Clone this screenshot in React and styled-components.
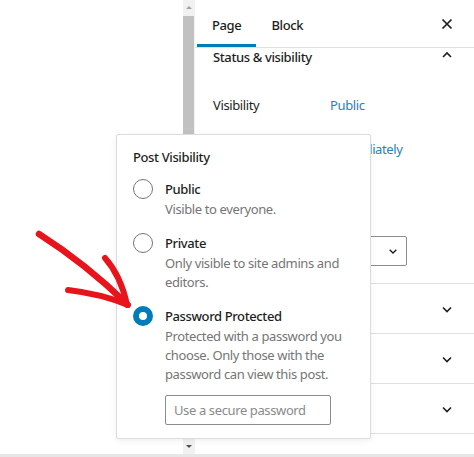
import React from "react";
import styled, { createGlobalStyle } from "styled-components";

const Global = createGlobalStyle`
  html, body { margin: 0; padding: 0; background: #fff; }
  body { font-family: "Noto Sans", "Open Sans", sans-serif; color: #1e1e1e; }
  * { box-sizing: border-box; }
`;

const Frame = styled.div`
  position: relative;
  width: 474px;
  height: 457px;
  overflow: hidden;
  display: flex;
  flex-direction: column;
  font-size: 13px;
  letter-spacing: -0.38px;
`;

const Main = styled.div`
  flex: 1;
  display: flex;
  min-height: 0;
`;

const Canvas = styled.div`
  width: 183px;
  background: #fff;
`;

const Scrollbar = styled.div`
  width: 12px;
  background: #f1f1f1;
  display: flex;
  flex-direction: column;
  align-items: center;
`;

const ScrollArrow = styled.div`
  height: 15px;
  width: 100%;
  display: flex;
  align-items: center;
  justify-content: center;
  &::before {
    content: "";
    border-left: 3px solid transparent;
    border-right: 3px solid transparent;
    ${(p) => (p.$down ? "border-top: 3px solid #505050;" : "border-bottom: 3px solid #a3a3a3;")}
  }
`;

const Track = styled.div`
  flex: 1;
  width: 100%;
  padding: 1px 1px 0 0;
`;

const Thumb = styled.div`
  width: 100%;
  height: 300px;
  background: #c1c1c1;
`;

const Sidebar = styled.div`
  flex: 1;
  min-width: 0;
  display: flex;
  flex-direction: column;
  overflow: hidden;
`;

const TabBar = styled.div`
  height: 48px;
  flex-shrink: 0;
  display: flex;
  align-items: stretch;
  padding-left: 2px;
  border-bottom: 1px solid #e0e0e0;
`;

const Tab = styled.div`
  padding: 2px 15px 0;
  display: flex;
  align-items: center;
  font-weight: 500;
  color: #1e1e1e;
  box-shadow: ${(p) => (p.$active ? "inset 0 -3px 0 #007cba" : "none")};
`;

const TabSpacer = styled.div`
  flex: 1;
`;

const IconButton = styled.div`
  width: 24px;
  margin-right: 15px;
  display: flex;
  align-items: center;
  justify-content: center;
  padding-bottom: ${(p) => p.$pb || 0}px;
`;

const PanelTitle = styled.div`
  height: 18px;
  display: flex;
  align-items: center;
  justify-content: space-between;
  padding-left: 18px;
  font-weight: 500;
  flex-shrink: 0;
`;

const PanelBody = styled.div`
  padding: 17px 0 0 18px;
  height: 217px;
  flex-shrink: 0;
`;

const Row = styled.div`
  height: 44px;
  display: flex;
  align-items: center;
`;

const RowLabel = styled.div`
  width: 117px;
`;

const RowLink = styled.div`
  color: #2a7fb8;
`;

const SelectRow = styled.div`
  padding-top: 21px;
  display: flex;
`;

const Select = styled.div`
  width: 194px;
  height: 30px;
  border: 1px solid #8c8c8c;
  border-radius: 2px;
  display: flex;
  align-items: center;
  justify-content: space-between;
  padding: 0 8px;
`;

const CollapsedPanel = styled.div`
  height: 50px;
  flex-shrink: 0;
  border-top: 1px solid #e0e0e0;
  display: flex;
  align-items: center;
  justify-content: space-between;
  padding-left: 18px;
  font-weight: 500;
`;

const BottomBand = styled.div`
  height: 3px;
  background: #e6e6e6;
  flex-shrink: 0;
`;

const Popover = styled.div`
  position: absolute;
  left: 116px;
  top: 134px;
  width: 255px;
  height: 305px;
  background: #fff;
  border: 1px solid #dcdcdc;
  border-radius: 2px;
  box-shadow: 0 2px 6px rgba(0, 0, 0, 0.06);
  padding: 13px 16px 12px 16px;
  display: flex;
  flex-direction: column;
`;

const PopTitle = styled.div`
  line-height: 18px;
  font-weight: 500;
  margin-bottom: 13px;
`;

const Option = styled.div`
  display: flex;
  gap: 12px;
  margin-bottom: 14px;
`;

const Radio = styled.div`
  width: 20px;
  height: 20px;
  flex-shrink: 0;
  border-radius: 50%;
  border: ${(p) => (p.$checked ? "6.5px solid #007cba" : "1.5px solid #757575")};
  background: #fff;
`;

const OptionText = styled.div`
  display: flex;
  flex-direction: column;
  min-width: 0;
  flex: 1;
`;

const OptionLabel = styled.div`
  line-height: 20px;
  font-weight: 500;
  margin-bottom: 1px;
`;

const OptionDesc = styled.div`
  line-height: 19px;
  color: #757575;
`;

const PasswordInput = styled.input`
  margin: -3px 0 0 32px;
  width: 166px;
  height: 30px;
  border: 1px solid #8c8c8c;
  border-radius: 2px;
  padding: 0 8px;
  font-family: inherit;
  font-size: 13px;
  letter-spacing: -0.38px;
  color: #1e1e1e;
  outline: none;
  &::placeholder { color: #8a8a8a; }
`;

const Annotation = styled.svg`
  position: absolute;
  left: 0;
  top: 0;
  pointer-events: none;
`;

const Chevron = ({ up, size = 12 }) => (
  <svg width={size} height={size} viewBox="0 0 12 12" fill="none" stroke="#1e1e1e" strokeWidth="1.6">
    {up ? <path d="M2 8 L6 4 L10 8" /> : <path d="M2 4.5 L6 8.5 L10 4.5" />}
  </svg>
);

export default function App() {
  return (
    <>
      <Global />
      <Frame>
        <Main>
          <Canvas />
          <Scrollbar>
            <ScrollArrow />
            <Track>
              <Thumb />
            </Track>
            <ScrollArrow $down />
          </Scrollbar>
          <Sidebar>
            <TabBar>
              <Tab $active>Page</Tab>
              <Tab>Block</Tab>
              <TabSpacer />
              <IconButton>
                <svg width="12" height="12" viewBox="0 0 12 12" stroke="#1e1e1e" strokeWidth="1.7">
                  <path d="M1.5 1.5 L10.5 10.5 M10.5 1.5 L1.5 10.5" />
                </svg>
              </IconButton>
            </TabBar>
            <PanelTitle>
              <span>Status &amp; visibility</span>
              <IconButton $pb={4}>
                <Chevron up />
              </IconButton>
            </PanelTitle>
            <PanelBody>
              <Row>
                <RowLabel>Visibility</RowLabel>
                <RowLink>Public</RowLink>
              </Row>
              <Row>
                <RowLabel>Publish</RowLabel>
                <RowLink>Immediately</RowLink>
              </Row>
              <Row>
                <RowLabel>Pending review</RowLabel>
              </Row>
              <SelectRow>
                <Select>
                  <span>Admin</span>
                  <Chevron size={10} />
                </Select>
              </SelectRow>
            </PanelBody>
            <CollapsedPanel>
              <span>Permalink</span>
              <IconButton><Chevron /></IconButton>
            </CollapsedPanel>
            <CollapsedPanel>
              <span>Featured image</span>
              <IconButton><Chevron /></IconButton>
            </CollapsedPanel>
            <CollapsedPanel>
              <span>Discussion</span>
              <IconButton><Chevron /></IconButton>
            </CollapsedPanel>
            <CollapsedPanel>
              <span>Page Attributes</span>
              <IconButton><Chevron /></IconButton>
            </CollapsedPanel>
          </Sidebar>
        </Main>
        <BottomBand />

        <Popover>
          <PopTitle>Post Visibility</PopTitle>
          <Option>
            <Radio />
            <OptionText>
              <OptionLabel>Public</OptionLabel>
              <OptionDesc>Visible to everyone.</OptionDesc>
            </OptionText>
          </Option>
          <Option>
            <Radio />
            <OptionText>
              <OptionLabel>Private</OptionLabel>
              <OptionDesc>Only visible to site admins and editors.</OptionDesc>
            </OptionText>
          </Option>
          <Option>
            <Radio $checked />
            <OptionText>
              <OptionLabel>Password Protected</OptionLabel>
              <OptionDesc>Protected with a password you choose. Only those with the password can view this post.</OptionDesc>
            </OptionText>
          </Option>
          <PasswordInput placeholder="Use a secure password" />
        </Popover>

        <Annotation width="474" height="457" viewBox="0 0 474 457">
          <g fill="none" stroke="#e8141b" strokeLinecap="round" strokeLinejoin="round">
            <path d="M39 234 Q 86 264 127 304" strokeWidth="6.5" />
            <path d="M105 258 Q 121 276 127 305" strokeWidth="6" />
            <path d="M68 290 Q 102 294 128 305" strokeWidth="6" />
          </g>
        </Annotation>
      </Frame>
    </>
  );
}
